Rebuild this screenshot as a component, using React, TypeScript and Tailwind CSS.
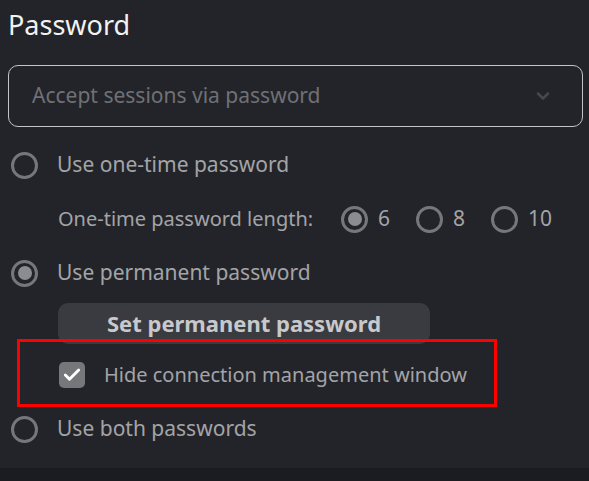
import { Check, ChevronDown } from 'lucide-react'

function Radio({ checked = false }: { checked?: boolean }) {
  return (
    <span className="flex h-[27px] w-[27px] shrink-0 items-center justify-center rounded-full border-[3px] border-[#76777b]">
      {checked && <span className="h-[14px] w-[14px] rounded-full bg-[#8b8c90]" />}
    </span>
  )
}

export default function App() {
  const lengths = [
    { value: '6', checked: true },
    { value: '8', checked: false },
    { value: '10', checked: false },
  ]

  return (
    <div
      className="relative flex h-[481px] w-[589px] flex-col overflow-hidden bg-[#232429]"
      style={{ fontFamily: '"Noto Sans", "Open Sans", sans-serif' }}
    >
      <div className="flex flex-1 flex-col px-2">
        {/* Section title */}
        <h1 className="mt-[5px] text-[27px] leading-[40px] text-[#f2f2f2]">Password</h1>

        {/* Approve mode select */}
        <div className="mt-[20px] flex h-[62px] w-[575px] items-center justify-between rounded-[10px] border-[1.5px] border-[#c4c4c6] pl-[23px] pr-[29px]">
          <span className="text-[21px] text-[#6f7176]">Accept sessions via password</span>
          <ChevronDown className="h-[20px] w-[20px] text-[#46484d]" strokeWidth={3} />
        </div>

        {/* Options */}
        <div className="mt-[11px] flex flex-col text-[21px] text-[#a3a4a8]">
          <div className="flex h-[54px] items-center gap-[19px] pl-[3px]">
            <Radio />
            <span>Use one-time password</span>
          </div>

          <div className="flex h-[54px] items-center pl-[50px]">
            <span className="w-[283px] text-[20px]">One-time password length:</span>
            <div className="flex items-center">
              {lengths.map(l => (
                <div key={l.value} className="flex w-[75px] items-center gap-[10px]">
                  <Radio checked={l.checked} />
                  <span>{l.value}</span>
                </div>
              ))}
            </div>
          </div>

          <div className="flex h-[54px] items-center gap-[19px] pl-[3px]">
            <Radio checked />
            <span>Use permanent password</span>
          </div>

          <div className="ml-[50px] mt-[3px] flex h-[41px] w-[372px] items-center justify-center rounded-[10px] bg-[#3a3b40]">
            <span className="text-[22px] font-bold text-[#c8c9cc]">Set permanent password</span>
          </div>

          <div className="flex h-[58px] items-center gap-[19px] pl-[51px] pt-[4px]">
            <span className="flex h-[26px] w-[26px] items-center justify-center rounded-[5px] bg-[#76777b]">
              <Check className="h-[20px] w-[20px] text-white" strokeWidth={3.5} />
            </span>
            <span className="text-[20px]">Hide connection management window</span>
          </div>

          <div className="flex h-[54px] items-center gap-[19px] pl-[3px]">
            <Radio />
            <span>Use both passwords</span>
          </div>
        </div>
      </div>

      {/* Bottom strip */}
      <div className="h-[13px] bg-[#1b1c20]" />

      {/* Annotation highlight */}
      <div className="pointer-events-none absolute left-[17px] top-[339px] h-[68px] w-[480px] border-[3px] border-[#ff0000]" />
    </div>
  )
}
